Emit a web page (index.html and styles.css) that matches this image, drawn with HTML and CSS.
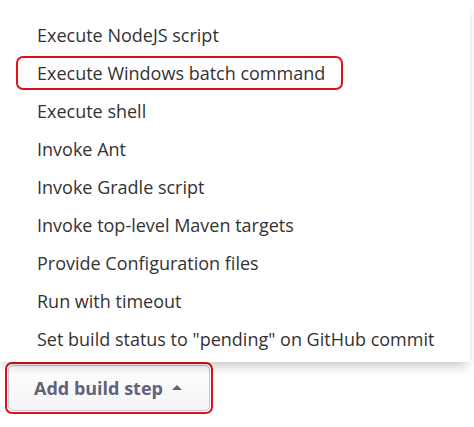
FILE: index.html
```html
<!DOCTYPE html>
<html>
<head>
<meta charset="utf-8">
<link rel="stylesheet" href="styles.css">
</head>
<body>
<div class="page">
  <ul class="menu">
    <li class="item">Execute NodeJS script</li>
    <li class="item"><span class="mark">Execute Windows batch command</span></li>
    <li class="item">Execute shell</li>
    <li class="item">Invoke Ant</li>
    <li class="item">Invoke Gradle script</li>
    <li class="item">Invoke top-level Maven targets</li>
    <li class="item">Provide Configuration files</li>
    <li class="item">Run with timeout</li>
    <li class="item">Set build status to "pending" on GitHub commit</li>
  </ul>
  <div class="btn-wrap">
    <button class="btn">Add build step <span class="caret"></span></button>
  </div>
</div>
</body>
</html>
```
FILE: styles.css
```css
html, body {
  margin: 0;
  padding: 0;
  background: #ffffff;
}
.page {
  width: 474px;
  height: 427px;
  overflow: hidden;
  font-family: "Open Sans", "Noto Sans", sans-serif;
}
.menu {
  list-style: none;
  margin: 0;
  padding: 16px 0 4px 0;
  width: 470px;
  background: #fff;
  position: relative;
  z-index: 2;
  box-shadow: 0 7px 10px -3px rgba(0,0,0,0.22);
}
.item {
  height: 38px;
  display: flex;
  align-items: center;
  padding-left: 37px;
  font-size: 18px;
  color: #333333;
  white-space: nowrap;
}
.mark {
  display: inline-flex;
  align-items: center;
  height: 30px;
  margin-left: -21px;
  padding: 0 16px 0 19px;
  border: 2px solid #e0111c;
  border-radius: 7px;
}
.btn-wrap {
  margin-left: 5px;
  width: 202px;
  height: 46px;
  border: 2px solid #e0111c;
  border-radius: 7px;
  display: flex;
  padding: 1px;
  box-sizing: content-box;
}
.btn {
  flex: 1;
  display: flex;
  align-items: center;
  padding: 0 0 0 25px;
  border: 1px solid #c8c8d0;
  border-radius: 5px;
  background: linear-gradient(#ffffff, #f4f4f6);
  font-family: inherit;
  font-weight: 700;
  font-size: 18px;
  color: #62627c;
  gap: 9px;
}
.caret {
  width: 0;
  height: 0;
  border-left: 5px solid transparent;
  border-right: 5px solid transparent;
  border-bottom: 5px solid #62627c;
  margin-top: -2px;
}
```
